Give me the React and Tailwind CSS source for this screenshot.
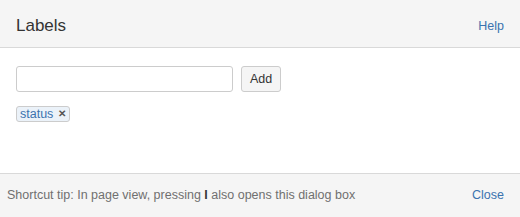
import React from "react";

const App = () => {
  return (
    <div className="w-[520px] h-[217px] bg-white flex flex-col font-['Liberation_Sans',Arial,sans-serif] overflow-hidden">
      <header className="h-[48px] bg-[#f5f5f5] border-b border-[#d9d9d9] flex items-center justify-between pl-[16px] pr-[16px] pt-[5px]">
        <h1 className="text-[17px] text-[#333]">Labels</h1>
        <a className="text-[12.5px] text-[#3b73af]">Help</a>
      </header>

      <main className="flex-1 px-[16px] pt-[18px]">
        <div className="flex items-center gap-[8px]">
          <input
            type="text"
            className="w-[217px] h-[26px] border border-[#ccc] rounded-[3px] bg-white outline-none"
          />
          <button className="h-[26px] w-[40px] border border-[#ccc] rounded-[3px] bg-[#f5f5f5] text-[12.5px] text-[#333]">
            Add
          </button>
        </div>
        <div className="mt-[14px] flex">
          <span className="h-[16px] w-[54px] px-[3px] flex items-center justify-between bg-[#ebf2f9] border border-[#ccc] rounded-[3px] text-[12.5px] leading-none text-[#3b73af]">
            status
            <span className="text-[10px] text-[#555] font-bold">✕</span>
          </span>
        </div>
      </main>

      <footer className="h-[44px] bg-[#f5f5f5] border-t border-[#d9d9d9] flex items-center justify-between pl-[7px] pr-[16px] text-[12.5px]">
        <span className="text-[#707070]">
          Shortcut tip: In page view, pressing <b className="text-[#333]">l</b> also opens this dialog box
        </span>
        <a className="text-[#3b73af]">Close</a>
      </footer>
    </div>
  );
};

export default App;
